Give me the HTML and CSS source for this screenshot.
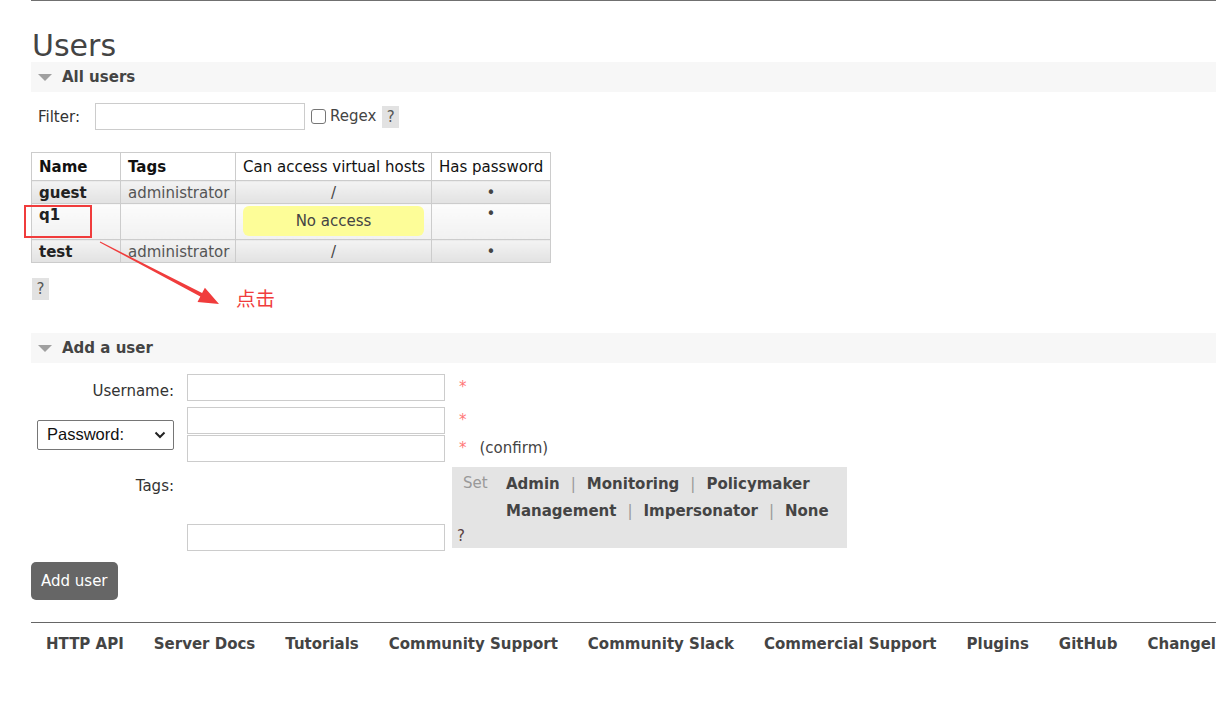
FILE: index.html
```html
<!DOCTYPE html>
<html lang="en">
<head>
<meta charset="utf-8">
<title>Users</title>
<link rel="stylesheet" href="styles.css">
</head>
<body>
<div class="page">
  <div class="topline"></div>
  <h1>Users</h1>

  <div class="section">
    <h2 class="band"><span class="tri"></span>All users</h2>
    <div class="filter">
      <span class="filter-label">Filter:</span>
      <input type="text" class="field filter-input">
      <span class="cb"></span>
      <span class="regex">Regex</span>
      <span class="help">?</span>
    </div>

    <table class="list">
      <colgroup>
        <col class="c-name"><col class="c-tags"><col class="c-vh"><col class="c-pw">
      </colgroup>
      <thead>
        <tr>
          <th class="b">Name</th>
          <th class="b">Tags</th>
          <th>Can access virtual hosts</th>
          <th>Has password</th>
        </tr>
      </thead>
      <tbody>
        <tr class="alt1">
          <td class="uname">guest</td>
          <td class="tag">administrator</td>
          <td class="center">/</td>
          <td class="center">•</td>
        </tr>
        <tr class="alt2 tall">
          <td class="uname">q1</td>
          <td></td>
          <td><div class="noaccess">No access</div></td>
          <td class="center">•</td>
        </tr>
        <tr class="alt1">
          <td class="uname">test</td>
          <td class="tag">administrator</td>
          <td class="center">/</td>
          <td class="center">•</td>
        </tr>
      </tbody>
    </table>
    <div class="help help-after">?</div>
  </div>

  <div class="section add">
    <h2 class="band"><span class="tri"></span>Add a user</h2>
    <div class="form">
      <div class="lbl lbl-user">Username:</div>
      <div class="row"><input type="text" class="field"><span class="mand">*</span></div>

      <div class="lbl">
        <div class="select-wrap">
          <span class="select">Password:</span>
          <svg class="chev" width="12" height="8" viewBox="0 0 12 8"><path d="M1.5 1.5 L6 6 L10.5 1.5" fill="none" stroke="#222" stroke-width="2"/></svg>
        </div>
      </div>
      <div class="stack">
        <div class="row"><input type="password" class="field"><span class="mand">*</span></div>
        <div class="row r2"><input type="password" class="field"><span class="mand">*</span><span class="confirm">(confirm)</span></div>
      </div>

      <div class="lbl lbl-top">Tags:</div>
      <div class="tagrow">
        <input type="text" class="field tag-input">
        <div class="tagbox">
          <div class="links">
            <span class="set">Set</span>
            <div class="linklines">
              <div class="ll"><span class="al">Admin</span><span class="sep">|</span><span class="al">Monitoring</span><span class="sep">|</span><span class="al">Policymaker</span></div>
              <div class="ll"><span class="al">Management</span><span class="sep">|</span><span class="al">Impersonator</span><span class="sep">|</span><span class="al">None</span></div>
            </div>
          </div>
          <span class="tag-help">?</span>
        </div>
      </div>
    </div>
    <button class="btn">Add user</button>
  </div>

  <div class="footer">
    <a>HTTP API</a><a>Server Docs</a><a>Tutorials</a><a>Community Support</a><a>Community Slack</a><a>Commercial Support</a><a>Plugins</a><a>GitHub</a><a>Changelog</a>
  </div>
</div>

<div class="annot-box"></div>
<svg class="annot-arrow" width="240" height="320" viewBox="0 0 240 320">
  <polygon points="100.2,241.6 202.1,293.0 204.9,287.7 219,304 197.5,301.9 200.3,296.6 99.8,242.4" fill="#f03c3c"/>
</svg>
<div class="annot-text">点击</div>
</body>
</html>
```

FILE: styles.css
```css
html, body {
  margin: 0;
  padding: 0;
  background: #fff;
}
body {
  font-family: "DejaVu Sans", Verdana, sans-serif;
  font-size: 15px;
  line-height: 17px;
  color: #484848;
  overflow: hidden;
  position: relative;
  width: 1216px;
  height: 712px;
}
.page {
  margin-left: 31px;
  width: 1300px;
}
.topline {
  border-top: 1px solid #707070;
}
h1 {
  font-size: 30px;
  line-height: 35px;
  font-weight: normal;
  color: #444;
  margin: 27px 0 -1px 1px;
}
.band {
  margin: 0;
  height: 30px;
  background: #f7f7f7;
  display: flex;
  align-items: center;
  padding-left: 7px;
  font-size: 15px;
  font-weight: bold;
  color: #444;
}
.tri {
  width: 0;
  height: 0;
  border-left: 7px solid transparent;
  border-right: 7px solid transparent;
  border-top: 7px solid #a0a0a0;
  margin-right: 10px;
  margin-top: 1px;
}
.filter {
  display: flex;
  align-items: center;
  margin-top: 11px;
  padding-left: 7px;
}
.filter-label {
  margin-right: 15px;
  color: #333;
  padding-top: 2px;
}
.field {
  box-sizing: border-box;
  width: 258px;
  height: 27px;
  border: 1px solid #ccc;
  border-radius: 0;
  padding: 0 4px;
  margin: 0;
  background: #fff;
  font: inherit;
  outline: none;
}
.filter-input {
  width: 210px;
}
.cb {
  box-sizing: border-box;
  width: 15px;
  height: 15px;
  border: 1px solid #767676;
  border-radius: 3px;
  margin-left: 6px;
  margin-right: 4px;
}
.regex {
  color: #444;
}
.help {
  display: inline-block;
  width: 17px;
  height: 22px;
  line-height: 22px;
  text-align: center;
  background: #e2e2e2;
  color: #555;
  margin-left: 6px;
}
.help-after {
  display: block;
  margin: 15px 0 0 1px;
}

/* users table */
table.list {
  border-collapse: collapse;
  table-layout: fixed;
  width: 519px;
  margin-top: 22px;
  border: 1px solid #ccc;
}
col.c-name { width: 89px; }
col.c-tags { width: 115px; }
col.c-vh { width: 196px; }
col.c-pw { width: 119px; }
table.list th,
table.list td {
  border: 1px solid #ccc;
  text-align: left;
  white-space: nowrap;
  vertical-align: top;
}
table.list th {
  padding: 6px 7px 4px;
  font-weight: normal;
  color: #111;
  background: #fff;
}
table.list th.b {
  font-weight: bold;
}
table.list td {
  padding: 4px 7px 1px;
}
tr.alt1 td {
  background: linear-gradient(#f3f3f3, #e2e2e2);
}
tr.alt2 td {
  background: linear-gradient(#fcfcfc, #f1f1f1);
}
tr.tall td {
  padding: 2px 7px 3px;
}
tr.tall td.uname {
  padding-top: 3px;
}
td.uname {
  font-weight: bold;
  color: #222;
}
td.tag {
  color: #555;
}
td.center {
  text-align: center !important;
  color: #444;
}
.noaccess {
  background: #fdfd98;
  border-radius: 6px;
  text-align: center;
  padding: 7px 0 6px;
  color: #444;
}

/* add user */
.add {
  margin-top: 33px;
}
.form {
  display: grid;
  grid-template-columns: 143px auto;
  column-gap: 13px;
  row-gap: 6px;
  align-items: center;
  margin-top: 11px;
}
.lbl {
  text-align: right;
  color: #333;
  display: flex;
  justify-content: flex-end;
}
.lbl-user {
  padding-top: 8px;
}
.lbl-top {
  align-self: start;
  padding-top: 10px;
}
.row {
  display: flex;
  align-items: center;
}
.r2 {
  margin-top: 1px;
}
.mand {
  color: #f77;
  margin-left: 14px;
  margin-top: 0;
}
.confirm {
  margin-left: 13px;
  color: #444;
}
.select-wrap {
  position: relative;
  box-sizing: border-box;
  width: 137px;
  height: 30px;
  border: 1px solid #767676;
  border-radius: 2px;
  background: #fff;
  display: flex;
  align-items: center;
}
.select {
  font-family: "Liberation Sans", Arial, sans-serif;
  font-size: 16.5px;
  color: #111;
  padding-left: 9px;
}
.chev {
  position: absolute;
  right: 7px;
  top: 10px;
}
.tagrow {
  display: flex;
  align-items: flex-start;
  margin-top: -1px;
}
.tag-input {
  margin-top: 57px;
}
.tagbox {
  box-sizing: border-box;
  width: 395px;
  height: 81px;
  margin-left: 7px;
  background: #e4e4e4;
  display: flex;
  flex-direction: column;
  padding-top: 4px;
}
.links {
  display: flex;
  padding-left: 11px;
}
.set {
  width: 43px;
  color: #999;
  line-height: 24px;
}
.ll {
  line-height: 27px;
  white-space: nowrap;
}
.al {
  font-weight: bold;
  color: #444;
}
.sep {
  color: #999;
  margin: 0 11px;
}
.tag-help {
  margin-top: auto;
  padding: 0 0 3px 5px;
  color: #5a4040;
}
.btn {
  display: block;
  margin-top: 11px;
  height: 38px;
  padding: 0 10px;
  border: none;
  border-radius: 5px;
  background: #666;
  color: #fff;
  font: inherit;
  font-size: 15px;
}

/* footer */
.footer {
  margin-top: 22px;
  border-top: 1px solid #666;
  padding-top: 13px;
  white-space: nowrap;
  display: flex;
}
.footer a {
  padding: 0 15px;
  font-weight: bold;
  color: #444;
}

/* annotation overlay */
.annot-box {
  position: absolute;
  left: 24px;
  top: 205px;
  width: 68px;
  height: 33px;
  box-sizing: border-box;
  border: 2px solid #f03c3c;
}
.annot-arrow {
  position: absolute;
  left: 0;
  top: 0;
}
.annot-text {
  position: absolute;
  left: 236px;
  top: 287px;
  font-family: "Noto Sans CJK SC", sans-serif;
  font-size: 19.5px;
  line-height: 22px;
  color: #f03c3c;
}
```
